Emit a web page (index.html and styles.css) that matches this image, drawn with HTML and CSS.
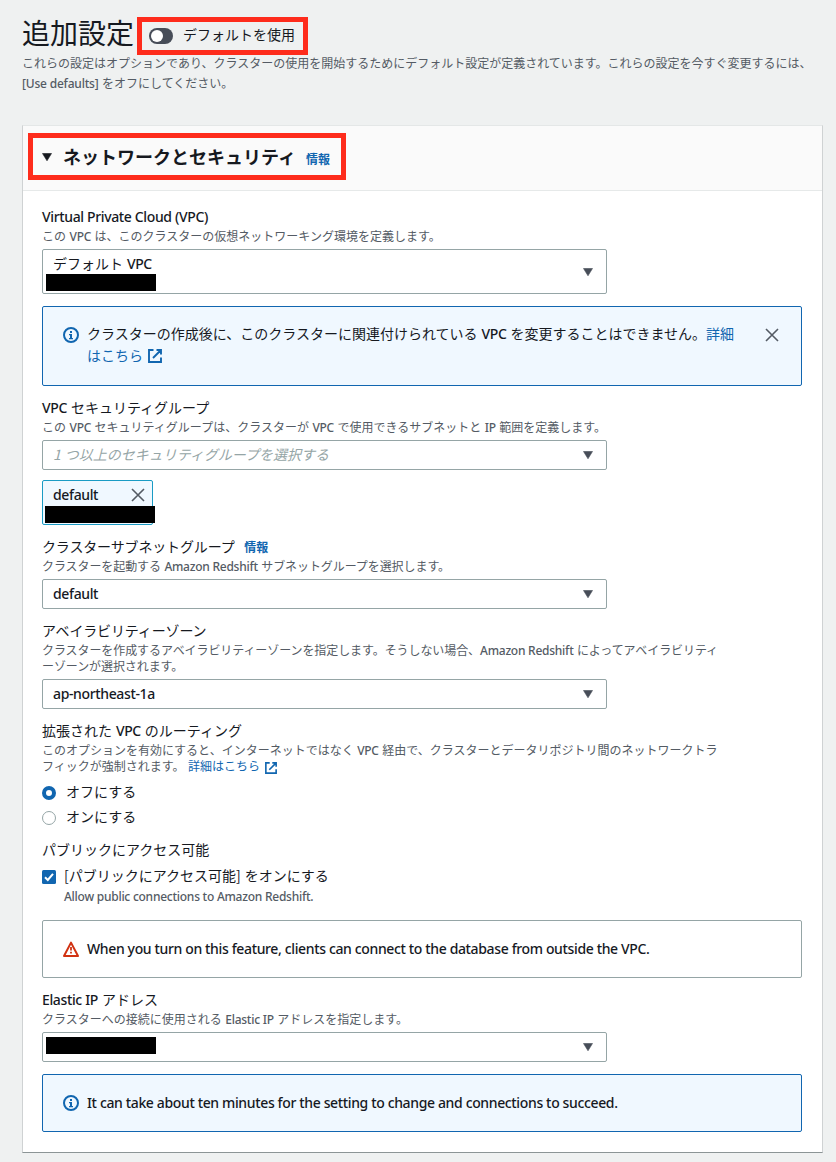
FILE: index.html
```html
<!DOCTYPE html>
<html lang="ja">
<head>
    <meta charset="UTF-8">
    <meta name="viewport" content="width=device-width, initial-scale=1.0">
    <title>追加設定</title>
    <link rel="stylesheet" href="styles.css">
</head>
<body>
    <svg class="defs" width="0" height="0">
        <symbol id="caret" viewBox="0 0 10 8"><path d="M0.5 0.5h9L5 7.8z" fill="currentColor" stroke="currentColor" stroke-width="0.6" stroke-linejoin="round"/></symbol>
        <symbol id="close" viewBox="0 0 14 14"><path d="M1 1l12 12M13 1L1 13" fill="none" stroke="currentColor" stroke-width="1.6"/></symbol>
        <symbol id="info" viewBox="0 0 16 16">
            <circle cx="8" cy="8" r="7" fill="none" stroke="currentColor" stroke-width="2"/>
            <path d="M7 4h2v2H7zM6 7h3v4h1v1.3H6V11h1V8.3H6z" fill="currentColor"/>
        </symbol>
        <symbol id="external" viewBox="0 0 14 14">
            <path d="M5.5 1H1v12h12V8.5M8.5 1H13v4.5M13 1L5 9" fill="none" stroke="currentColor" stroke-width="1.9"/>
        </symbol>
        <symbol id="warning" viewBox="0 0 16 16">
            <path d="M8 1.6L15 15H1z" fill="none" stroke="currentColor" stroke-width="2" stroke-linejoin="round"/>
            <path d="M7.1 6h1.8v3.6H7.1zM7.1 10.8h1.8v1.8H7.1z" fill="currentColor"/>
        </symbol>
    </svg>

    <header class="page-header">
        <div class="title-row">
            <h1>追加設定</h1>
            <div class="toggle-box">
                <span class="toggle"></span>
                <span class="toggle-label">デフォルトを使用</span>
            </div>
        </div>
        <p class="page-description">これらの設定はオプションであり、クラスターの使用を開始するためにデフォルト設定が定義されています。これらの設定を今すぐ変更するには、<br><span class="en">[Use defaults]</span> をオフにしてください。</p>
    </header>

    <main class="card">
        <div class="card-header">
            <div class="section-box">
                <svg class="caret"><use href="#caret"/></svg>
                <h2>ネットワークとセキュリティ</h2>
                <a class="info-link">情報</a>
            </div>
        </div>

        <div class="card-body">
            <section class="field">
                <div class="label"><span class="en">Virtual Private Cloud (VPC)</span></div>
                <div class="help">この <span class="en">VPC</span> は、このクラスターの仮想ネットワーキング環境を定義します。</div>
                <div class="select tall">
                    <span class="value">デフォルト <span class="en">VPC</span></span>
                    <span class="redacted"></span>
                    <svg class="caret"><use href="#caret"/></svg>
                </div>
            </section>

            <div class="alert info dismissible">
                <svg class="icon"><use href="#info"/></svg>
                <div class="alert-text">クラスターの作成後に、このクラスターに関連付けられている <span class="en">VPC</span> を変更することはできません。<a>詳細<br>はこちら <svg class="external"><use href="#external"/></svg></a></div>
                <svg class="close"><use href="#close"/></svg>
            </div>

            <section class="field">
                <div class="label"><span class="en">VPC</span> セキュリティグループ</div>
                <div class="help">この <span class="en">VPC</span> セキュリティグループは、クラスターが <span class="en">VPC</span> で使用できるサブネットと <span class="en">IP</span> 範囲を定義します。</div>
                <div class="select">
                    <span class="placeholder">1 つ以上のセキュリティグループを選択する</span>
                    <svg class="caret"><use href="#caret"/></svg>
                </div>
                <div class="token">
                    <span class="en">default</span>
                    <svg class="close"><use href="#close"/></svg>
                    <span class="redacted"></span>
                </div>
            </section>

            <section class="field tight">
                <div class="label">クラスターサブネットグループ <a class="info-link">情報</a></div>
                <div class="help">クラスターを起動する <span class="en">Amazon Redshift</span> サブネットグループを選択します。</div>
                <div class="select">
                    <span class="en">default</span>
                    <svg class="caret"><use href="#caret"/></svg>
                </div>
            </section>

            <section class="field tight">
                <div class="label">アベイラビリティーゾーン</div>
                <div class="help">クラスターを作成するアベイラビリティーゾーンを指定します。そうしない場合、<span class="en">Amazon Redshift</span> によってアベイラビリティ<br>ーゾーンが選択されます。</div>
                <div class="select">
                    <span class="en">ap-northeast-1a</span>
                    <svg class="caret"><use href="#caret"/></svg>
                </div>
            </section>

            <section class="field">
                <div class="label">拡張された <span class="en">VPC</span> のルーティング</div>
                <div class="help">このオプションを有効にすると、インターネットではなく <span class="en">VPC</span> 経由で、クラスターとデータリポジトリ間のネットワークトラ<br>フィックが強制されます。 <a>詳細はこちら <svg class="external"><use href="#external"/></svg></a></div>
                <div class="radios">
                    <div class="choice"><span class="radio checked"></span><span class="choice-text">オフにする</span></div>
                    <div class="choice"><span class="radio"></span><span class="choice-text">オンにする</span></div>
                </div>
            </section>

            <section class="field">
                <div class="label">パブリックにアクセス可能</div>
                <div class="choice check-row">
                    <svg class="checkbox" viewBox="0 0 14 14"><rect width="14" height="14" rx="1.5" fill="#1166b0"/><path d="M3 7.3l2.8 2.7L11 3.8" fill="none" stroke="#fff" stroke-width="2"/></svg>
                    <span class="choice-text">[パブリックにアクセス可能] をオンにする</span>
                </div>
                <div class="help check-help"><span class="en">Allow public connections to Amazon Redshift.</span></div>
            </section>

            <div class="alert warning">
                <svg class="icon"><use href="#warning"/></svg>
                <div class="alert-text"><span class="en">When you turn on this feature, clients can connect to the database from outside the VPC.</span></div>
            </div>

            <section class="field">
                <div class="label"><span class="en">Elastic IP</span> アドレス</div>
                <div class="help">クラスターへの接続に使用される <span class="en">Elastic IP</span> アドレスを指定します。</div>
                <div class="select">
                    <span class="redacted"></span>
                    <svg class="caret"><use href="#caret"/></svg>
                </div>
            </section>

            <div class="alert info">
                <svg class="icon"><use href="#info"/></svg>
                <div class="alert-text"><span class="en">It can take about ten minutes for the setting to change and connections to succeed.</span></div>
            </div>
        </div>
    </main>
</body>
</html>
```

FILE: styles.css
```css
* {
    box-sizing: border-box;
}
body {
    margin: 0;
    padding: 17px 14px 9px 22px;
    min-height: 1162px;
    background-color: #eff1f1;
    color: #16191f;
    font-family: 'Noto Sans CJK JP', 'Noto Sans', sans-serif;
    font-size: 14px;
    line-height: 22px;
    word-spacing: 0.8px;
    white-space: nowrap;
}
.defs {
    position: absolute;
}
.en {
    font-family: 'Noto Sans', sans-serif;
    font-weight: 500;
    line-height: 1;
    letter-spacing: -0.36px;
    word-spacing: 0;
}
a {
    color: #1166b0;
}
h1, h2, p {
    margin: 0;
    font-weight: normal;
}
.title-row {
    display: flex;
    height: 38px;
}
h1 {
    width: 115px;
    font-size: 28px;
    line-height: 30px;
}
.toggle-box {
    display: flex;
    align-items: center;
    gap: 10px;
    width: 171px;
    height: 38px;
    padding-left: 7px;
    border: 5px solid #fe2c1c;
}
.toggle {
    width: 24px;
    height: 16px;
    padding: 2px;
    border-radius: 8px;
    background: #474d58;
}
.toggle::before {
    content: "";
    display: block;
    width: 12px;
    height: 12px;
    border-radius: 50%;
    background: white;
}
.toggle-label {
    padding-bottom: 4px;
}
.page-description {
    height: 72px;
    margin-top: -2px;
    font-size: 12px;
    line-height: 20px;
    color: #545b64;
}
.page-description .en {
    letter-spacing: -0.2px;
}
.card {
    width: 801px;
    height: 1028px;
    background: white;
    border: 1px solid #cfd2d3;
    border-top-color: #e4e7e7;
    border-bottom-color: #8c9596;
}
.card-header {
    height: 65px;
    padding: 7px 5px;
    background: #fafafa;
    border-bottom: 1px solid #e6e9e9;
}
.section-box {
    display: flex;
    align-items: center;
    width: 318px;
    height: 47px;
    padding-left: 9px;
    border: 5px solid #fe2c1c;
}
.section-box .caret {
    margin-right: 11px;
    color: #16191f;
}
h2 {
    padding-bottom: 2px;
    font-size: 18px;
    font-weight: bold;
}
.info-link {
    font-size: 12px;
    font-weight: bold;
}
.section-box .info-link {
    margin-left: 10px;
    padding-top: 4px;
}
.label .info-link {
    margin-left: 6px;
}
.card-body {
    display: flex;
    flex-direction: column;
    gap: 12px;
    padding: 16px 20px 20px 19px;
}
.label {
    height: 21px;
    line-height: 18px;
}
.help {
    margin-bottom: 1px;
    font-size: 12px;
    line-height: 16px;
    color: #545b64;
}
.help .en {
    letter-spacing: -0.25px;
}
.tight .label {
    letter-spacing: -0.15px;
}
.tight .help {
    letter-spacing: -0.08px;
}
.select {
    position: relative;
    display: flex;
    align-items: center;
    width: 565px;
    height: 30px;
    margin-top: 4px;
    padding: 0 13px 0 10px;
    border: 1px solid #95a5a6;
    border-radius: 2px;
}
.help + .select {
    margin-top: 5px;
}
.help {
    margin-bottom: 0;
}
.select.tall {
    height: 45px;
}
.tall .value {
    align-self: flex-start;
    margin-top: 2px;
}
.caret {
    width: 10px;
    height: 8px;
    color: #474d58;
}
.select .caret {
    margin-left: auto;
}
.placeholder {
    padding-bottom: 3px;
    color: #95a5a6;
    font-style: italic;
}
.redacted {
    position: absolute;
    left: 3px;
    top: 4px;
    width: 110px;
    height: 17px;
    background: black;
}
.tall .redacted {
    top: 24px;
}
.token {
    position: relative;
    display: flex;
    justify-content: space-between;
    width: 111px;
    height: 45px;
    margin-top: 10px;
    padding: 7px 7px 0 10px;
    background: #f0f8ff;
    border: 1px solid #1a9bc4;
    border-radius: 2px;
}
.token .redacted {
    left: 2px;
    top: 25px;
}
.close {
    width: 14px;
    height: 14px;
    color: #545b64;
}
.token .close {
    margin-top: 0;
}
.alert {
    display: flex;
    gap: 8px;
    height: 58px;
    padding: 17px 22px 0 20px;
    border: 1px solid #95a5a6;
    border-radius: 2px;
}
.alert.info {
    background: #f0f8ff;
    border-color: #1166b0;
}
.alert.dismissible {
    height: 80px;
}
.alert-text {
    margin-top: -1px;
}
.dismissible .alert-text {
    margin-top: -2px;
}
.alert .icon {
    width: 16px;
    height: 16px;
    margin-top: 3px;
    color: #1166b0;
}
.alert.warning .icon {
    color: #d13212;
}
.alert .close {
    margin: 4px 0 0 auto;
}
.external {
    width: 14px;
    height: 14px;
    margin-left: 1px;
    vertical-align: -2px;
}
.help .external {
    width: 12px;
    height: 12px;
    vertical-align: -3px;
}
.radios {
    display: flex;
    flex-direction: column;
    gap: 3px;
    margin-top: 8px;
    margin-bottom: -1px;
}
.choice {
    display: flex;
    align-items: center;
    gap: 10px;
    height: 22px;
}
.choice-text {
    padding-bottom: 4px;
}
.radio {
    width: 14px;
    height: 14px;
    border: 1px solid #95a5a6;
    border-radius: 50%;
    background: white;
}
.radio.checked {
    border: 4px solid #1166b0;
}
.check-row {
    gap: 8px;
    margin-top: 5px;
}
.checkbox {
    width: 14px;
    height: 14px;
}
.check-help {
    margin-left: 22px;
    margin-bottom: 4px;
}
```
